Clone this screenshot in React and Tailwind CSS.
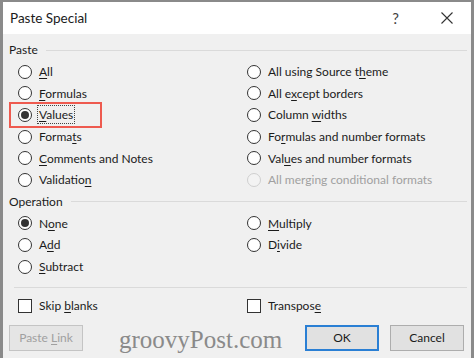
import React from 'react';

const FONT = { fontFamily: 'Lato, "Noto Sans", sans-serif' };

// label with one underlined access key
function Key({ text, k, disabled }) {
  const i = k == null ? -1 : k;
  return (
    <span className={disabled ? 'text-[#a0a0a0]' : 'text-[#1b1b1b]'}>
      {i < 0 ? text : (
        <>
          {text.slice(0, i)}
          <span className="underline underline-offset-[2px] decoration-1">{text[i]}</span>
          {text.slice(i + 1)}
        </>
      )}
    </span>
  );
}

function Radio({ label, k, checked, disabled, focus }) {
  return (
    <div className="h-[21.6px] flex items-center pl-[9px]">
      <span
        className={`w-[14px] h-[14px] rounded-full border flex items-center justify-center flex-shrink-0 ${
          disabled ? 'border-[#cfcfcf] bg-[#f3f3f3]' : 'border-[#333] bg-white'
        }`}
      >
        {checked && <span className="w-[8px] h-[8px] rounded-full bg-[#333]" />}
      </span>
      <span className={`leading-[17px] ${focus ? 'ml-[6px] px-[1px] outline outline-1 outline-dotted outline-[#444]' : 'ml-[7px]'}`}>
        <Key text={label} k={k} disabled={disabled} />
      </span>
    </div>
  );
}

function Check({ label, k }) {
  return (
    <div className="h-[21px] flex items-center pl-[9px]">
      <span className="w-[14px] h-[14px] border border-[#333] bg-white flex-shrink-0" />
      <span className="ml-[7px]">
        <Key text={label} k={k} />
      </span>
    </div>
  );
}

function GroupHead({ title }) {
  return (
    <div className="h-[16px] flex items-center">
      <span className="text-[#1b1b1b]">{title}</span>
      <span className="flex-1 ml-[8px] border-t border-[#dadada]" />
    </div>
  );
}

const pasteLeft = [
  { label: 'All', k: 0 },
  { label: 'Formulas', k: 0 },
  { label: 'Values', k: 0, checked: true, focus: true, boxed: true },
  { label: 'Formats', k: 5 },
  { label: 'Comments and Notes', k: 0 },
  { label: 'Validation', k: 9 },
];

const pasteRight = [
  { label: 'All using Source theme', k: 18 },
  { label: 'All except borders', k: 5 },
  { label: 'Column widths', k: 7 },
  { label: 'Formulas and number formats', k: 2 },
  { label: 'Values and number formats', k: 3 },
  { label: 'All merging conditional formats', disabled: true },
];

export default function App() {
  return (
    <div
      className="w-[474px] h-[358px] bg-[#8a8a8a] pt-[2px] px-[3px] flex flex-col overflow-hidden text-[12px]"
      style={FONT}
    >
      {/* Title bar */}
      <div className="h-[32px] bg-white flex items-center pl-[7px] flex-shrink-0">
        <span className="text-[13.5px] text-[#1b1b1b]">Paste Special</span>
        <span className="ml-auto text-[15px] text-[#444] mr-[42px]">?</span>
        <svg width="12" height="12" viewBox="0 0 12 12" className="mr-[18px]">
          <path d="M0.5 0.5 L11.5 11.5 M11.5 0.5 L0.5 11.5" stroke="#333" strokeWidth="1.1" />
        </svg>
      </div>

      {/* Body */}
      <div className="flex-1 bg-[#f0f0f0] pl-[6px] pr-[4px] flex flex-col">
        <div className="mt-[8px]">
          <GroupHead title="Paste" />
        </div>
        <div className="mt-[3px] grid grid-cols-[229px_1fr]">
          <div>
            {pasteLeft.map(r => (
              <div key={r.label} className="relative">
                <Radio {...r} />
                {r.boxed && (
                  <div className="absolute left-0 top-[-2px] w-[93px] h-[26px] border-[2px] border-[#ee5a4f]" />
                )}
              </div>
            ))}
          </div>
          <div>
            {pasteRight.map(r => (
              <Radio key={r.label} {...r} />
            ))}
          </div>
        </div>

        <div className="mt-[3px]">
          <GroupHead title="Operation" />
        </div>
        <div className="mt-[3px] grid grid-cols-[229px_1fr]">
          <div>
            <Radio label="None" k={1} checked />
            <Radio label="Add" k={1} />
            <Radio label="Subtract" k={0} />
          </div>
          <div>
            <Radio label="Multiply" k={0} />
            <Radio label="Divide" k={1} />
          </div>
        </div>

        <div className="mt-[10px] ml-[5px] border-t border-[#dadada]" />

        <div className="mt-[7px] grid grid-cols-[229px_1fr]">
          <Check label="Skip blanks" k={5} />
          <Check label="Transpose" k={8} />
        </div>

        {/* Buttons */}
        <div className="mt-[7px] flex items-center">
          <button className="w-[74px] h-[26px] bg-[#e5e5e5] border border-[#c4c4c4] text-[#9d9d9d]">
            <Key text="Paste Link" k={6} disabled />
          </button>
          <span
            className="ml-[36px] text-[25px] text-[#8a8a8a] leading-none mt-[4px]"
            style={{ fontFamily: '"Liberation Serif", "DejaVu Serif", serif' }}
          >
            groovyPost.com
          </span>
          <button className="ml-auto w-[74px] h-[26px] bg-[#e1e1e1] border-[2px] border-[#2a7fd4] text-[#1b1b1b]">
            OK
          </button>
          <button className="ml-[11px] mr-[3px] w-[74px] h-[26px] bg-[#e1e1e1] border border-[#adadad] text-[#1b1b1b]">
            Cancel
          </button>
        </div>
      </div>
    </div>
  );
}
